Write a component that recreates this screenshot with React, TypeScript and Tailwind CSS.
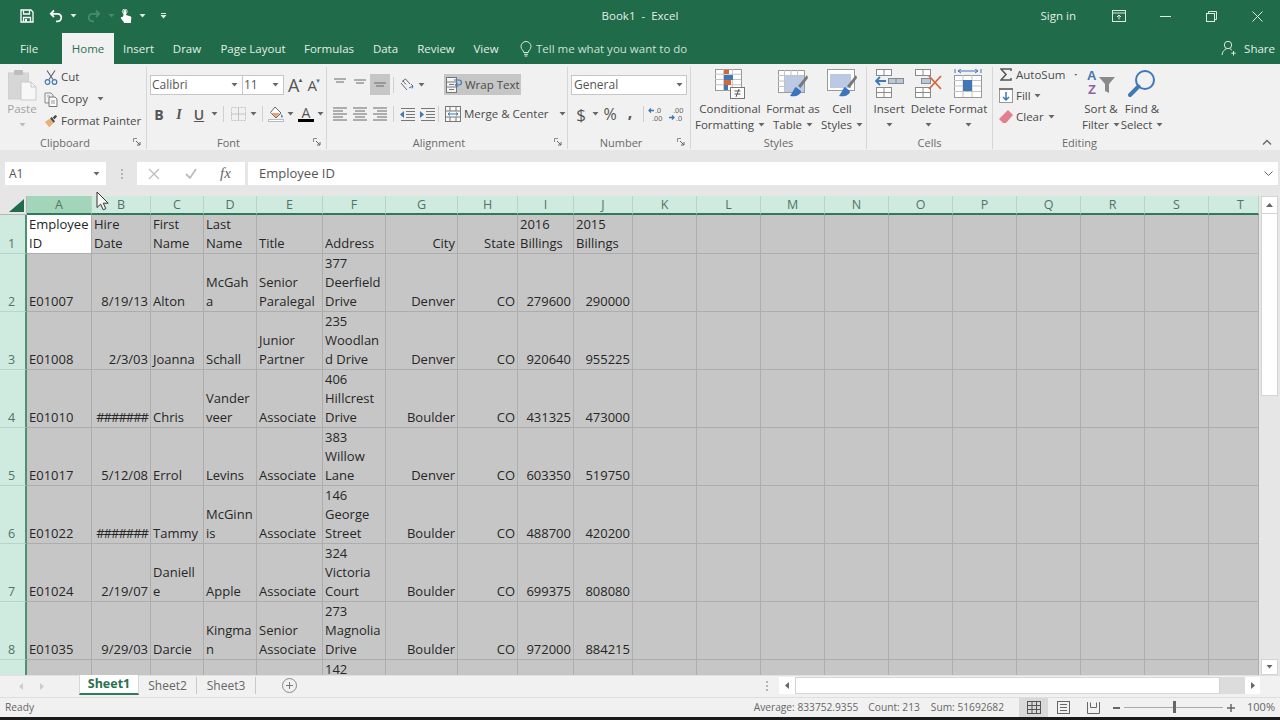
import React from "react";

const UI = "[font-family:'Open_Sans','Noto_Sans',sans-serif]";

const Caret = ({ c = "#666", className = "" }: { c?: string; className?: string }) => (
  <svg width="7" height="4" viewBox="0 0 7 4" className={className}><path d="M0.5 0h6L3.5 3.6z" fill={c} /></svg>
);

const Launcher = () => (
  <svg width="8" height="8" viewBox="0 0 8 8" className="absolute right-[5px] top-[3px]">
    <path d="M0.5 4V0.5H4" stroke="#8a8a8a" fill="none" />
    <path d="M3 3l4 4M4 7h3V4" stroke="#666" fill="none" />
  </svg>
);

const Lines = ({ w, align }: { w: number[]; align: "l" | "c" | "r" }) => (
  <svg width="16" height="14" viewBox="0 0 16 14">
    {w.map((len, i) => {
      const x = align === "l" ? 1 : align === "c" ? 8 - len / 2 : 15 - len;
      return <rect key={i} x={x} y={i * 3 + 0.5} width={len} height="1" fill="#6a6a6a" />;
    })}
  </svg>
);

const Group = ({ w, label, launcher, children, last }: { w: string; label: string; launcher?: boolean; children: React.ReactNode; last?: boolean }) => (
  <div className={`${w} flex flex-col h-[82px] mt-[3px] ${last ? "" : "border-r border-[#d6d6d6]"}`}>
    <div className="h-[67px] flex shrink-0">{children}</div>
    <div className={`relative h-[14px] mt-[1px] flex items-center justify-center text-[11px] text-[#6a6a6a] leading-none ${launcher ? "pr-[16px]" : ""}`}>
      {label}
      {launcher && <Launcher />}
    </div>
  </div>
);

const Large = ({ w, icon, l1, l2, caret, dim }: { w: string; icon: React.ReactNode; l1: string; l2?: string; caret?: boolean; dim?: boolean }) => (
  <div className={`${w} flex flex-col items-center shrink-0 whitespace-nowrap text-[11.5px] leading-[16px] ${dim ? "text-[#a3a3a3]" : "text-[#4a4a4a]"}`}>
    <div className="h-[32px] flex items-start justify-center">{icon}</div>
    <div>{l1}</div>
    <div className="h-[16px] flex items-center gap-[4px]">
      {l2 && <span>{l2}</span>}
      {caret && <Caret c={dim ? "#bbb" : "#666"} />}
    </div>
  </div>
);

const Small = ({ icon, label, caret, h = "h-[22px]", gap = "gap-[3px]", w = "w-[14px]" }: { icon: React.ReactNode; label: string; caret?: React.ReactNode; h?: string; gap?: string; w?: string }) => (
  <div className={`${h} flex items-center text-[11.5px] text-[#4a4a4a] whitespace-nowrap ${gap}`}>
    <div className={`${w} flex justify-center shrink-0`}>{icon}</div>
    <span>{label}</span>
    {caret}
  </div>
);

/* ---------- icons ---------- */
const Save = () => (
  <svg width="14" height="14" viewBox="0 0 14 14" fill="none" stroke="#fff" strokeWidth="1.3">
    <path d="M1 1h10l2 2v10H1z" /><path d="M3.5 1v4h6V1" /><path d="M3.5 13V8.5h7V13" /><rect x="5" y="10" width="2" height="3" fill="#fff" stroke="none" />
  </svg>
);
const Undo = ({ c = "#fff", className = "" }: { c?: string; className?: string }) => (
  <svg width="15" height="14" viewBox="0 0 15 14" fill="none" stroke={c} strokeWidth="1.8" className={className}>
    <path d="M5 1.5L1.8 4.8 5 8" /><path d="M2 4.8h6.5a3.7 3.7 0 0 1 0 7.6H7" />
  </svg>
);
const Touch = () => (
  <svg width="12" height="15" viewBox="0 0 12 15" fill="#fff">
    <path d="M3.5 6V2.2a1.3 1.3 0 0 1 2.6 0V6l4 1.3c1 .4 1.4 1 1.2 2L10.8 14H4.4L1 9.6c-.7-1 .5-2 1.4-1.3z" />
    <circle cx="4.8" cy="2.5" r="2.4" fill="none" stroke="#fff" strokeWidth=".8" />
  </svg>
);
const Bulb = () => (
  <svg width="12" height="16" viewBox="0 0 12 16" fill="none" stroke="#d8e8df" strokeWidth="1">
    <path d="M3.8 11.5C3.5 9.2 1 8.5 1 5.5a5 5 0 0 1 10 0c0 3-2.5 3.7-2.8 6z" /><path d="M4 13.3h4M4.6 15h2.8" />
  </svg>
);
const Person = () => (
  <svg width="16" height="16" viewBox="0 0 16 16" fill="none" stroke="#dfeae4" strokeWidth="1">
    <circle cx="7" cy="5" r="3.7" /><path d="M1 15c.3-3.5 2.5-5.500 4.500-6.300M8.800 8.700c.8.300 1.400.700 2 1.300" /><path d="M12.500 11v4.500M10.300 13.200h4.500" />
  </svg>
);
const WinRibbon = () => (
  <svg width="14" height="12" viewBox="0 0 14 12" fill="none" stroke="#dfeae4" strokeWidth="1">
    <rect x=".5" y=".5" width="13" height="11" /><path d="M.5 3h13" /><path d="M7 9.500V5M5 7l2-2 2 2" />
  </svg>
);
const Paste = () => (
  <svg width="29" height="32" viewBox="0 0 29 32">
    <rect x="0.500" y="4" width="20" height="26" fill="#d6d6d6" stroke="#cfcfcf" />
    <rect x="6" y="1" width="9" height="5" rx="1" fill="#bdbdbd" />
    <path d="M13 13h10l5 5v13H13z" fill="#f7f7f7" stroke="#c9c9c9" />
    <path d="M23 13v5h5" fill="none" stroke="#c9c9c9" />
  </svg>
);
const Scissors = () => (
  <svg width="14" height="15" viewBox="0 0 14 15" fill="none">
    <path d="M3 .5L9 9.500M11 .5L5 9.500" stroke="#666" strokeWidth="1.200" />
    <circle cx="3.500" cy="12" r="2.300" stroke="#3f78b5" strokeWidth="1.200" /><circle cx="10.500" cy="12" r="2.300" stroke="#3f78b5" strokeWidth="1.200" />
  </svg>
);
const Copy = () => (
  <svg width="14" height="15" viewBox="0 0 14 15" fill="none" stroke="#8a8a8a">
    <path d="M1 1h6l2 2v8H1z" fill="#f2f2f2" /><path d="M5 5h6l2 2v7.500H5z" fill="#fafafa" stroke="#777" /><path d="M7 9h4M7 11h4M3 4h3" stroke="#999" />
  </svg>
);
const Brush = () => (
  <svg width="15" height="14" viewBox="0 0 16 14">
    <path d="M1 8l6-4 4 5-5 5z" fill="#e8b174" /><path d="M7 4l4 5 1.500-1.500-3.500-5z" fill="#444" /><path d="M10 3l3-3 2 1.500-3 3.500z" fill="#444" />
  </svg>
);
const Borders = () => (
  <svg width="15" height="14" viewBox="0 0 15 14" fill="none" stroke="#c4c4c4">
    <rect x=".5" y=".5" width="14" height="13" strokeDasharray="2 1" /><path d="M7.500 0v14M0 7h15" />
  </svg>
);
const Fill = () => (
  <svg width="16" height="16" viewBox="0 0 16 16">
    <path d="M7 1l6 6-5 5-5.500-5.500z" fill="#fff" stroke="#666" /><path d="M3 7h9l-4 4.500z" fill="#e9a27d" /><path d="M13.500 8c1 1.500 1.500 2.300 1 3.200-.5.600-1.500.3-1.500-.6z" fill="#3f78b5" />
    <rect x="0.500" y="13.500" width="15" height="2" fill="#fff" stroke="#bbb" />
  </svg>
);
const OrientIcon = () => (
  <svg width="14" height="14" viewBox="0 0 14 14" fill="none" stroke="#666" strokeWidth="1">
    <path d="M1 5l6 7M3 3l3 3.500M2 3.500L5.500 1 10 6" /><path d="M9 10l4-2M11 6l2 2-1 2.500" stroke="#3f78b5" />
  </svg>
);
const Outdent = () => (
  <svg width="16" height="13" viewBox="0 0 16 13">
    <path d="M1 6.500L5 3v7z" fill="#3f78b5" /><path d="M2 0.500h14M7 3.500h9M7 6.500h9M7 9.500h9M2 12.500h14" stroke="#777" fill="none" />
  </svg>
);
const Indent = () => (
  <svg width="16" height="13" viewBox="0 0 16 13">
    <path d="M5 6.500L1 3v7z" fill="#3f78b5" /><path d="M2 0.500h14M7 3.500h9M7 6.500h9M7 9.500h9M2 12.500h14" stroke="#777" fill="none" />
  </svg>
);
const Wrap = () => (
  <svg width="16" height="16" viewBox="0 0 16 16" fill="none" className="shrink-0">
    <rect x=".5" y=".5" width="10" height="15" fill="#f4f4f4" stroke="#777" /><path d="M.5 5h10M.5 10h10M3 7.500h5M3 12.500h5" stroke="#777" />
    <path d="M8 3h5a2 2 0 0 1 0 5h-3M11.500 6L9.500 8l2 2" stroke="#3f78b5" strokeWidth="1.200" />
  </svg>
);
const Merge = () => (
  <svg width="16" height="16" viewBox="0 0 16 16" fill="none" stroke="#777" className="shrink-0">
    <rect x=".5" y=".5" width="15" height="15" fill="#f8f8f8" /><path d="M.5 5h15M.5 11h15M5 .5V5M11 .5V5M5 11v4.500M11 11v4.500" />
    <path d="M3 8h10M5 6.500L3 8l2 1.500M11 6.500L13 8l-2 1.500" stroke="#3f78b5" />
  </svg>
);
const IncDec = ({ inc }: { inc?: boolean }) => (
  <svg width="17" height="16" viewBox="0 0 17 16">
    <path d={inc ? "M1 4.500h5M3 2.500L1 4.500l2 2" : "M1 11.500h5M4 9.500l2 2-2 2"} stroke="#3f78b5" strokeWidth="1.300" fill="none" />
    <text x={inc ? 7 : 5} y="7" fontSize="7.500" fill="#666" fontFamily="Liberation Sans">{inc ? ".0" : ".00"}</text>
    <text x={inc ? 4 : 8} y="15" fontSize="7.500" fill="#666" fontFamily="Liberation Sans">{inc ? ".00" : ".0"}</text>
  </svg>
);
const TableGrid = ({ x, y, w, h, cols, rows }: { x: number; y: number; w: number; h: number; cols: number; rows: number }) => {
  const p: string[] = [];
  for (let i = 1; i < cols; i++) p.push(`M${x + (w * i) / cols} ${y}v${h}`);
  for (let i = 1; i < rows; i++) p.push(`M${x} ${y + (h * i) / rows}h${w}`);
  return <g><rect x={x + .5} y={y + .5} width={w} height={h} fill="#fff" stroke="#9a9a9a" /><path d={p.join("")} stroke="#c3c3c3" fill="none" /></g>;
};
const CondFmt = () => (
  <svg width="30" height="31" viewBox="0 0 30 31">
    <TableGrid x={0} y={0} w={26} h={21} cols={3} rows={4} />
    <rect x="9" y="1" width="5" height="4" fill="#d4663e" /><rect x="9" y="6" width="9" height="5" fill="#3f78b5" /><rect x="9" y="11" width="7" height="5" fill="#d4663e" /><rect x="9" y="16" width="4" height="5" fill="#3f78b5" />
    <rect x="15.500" y="18.500" width="14" height="11" fill="#fff" stroke="#777" />
    <path d="M19.500 22h6M19.500 25h6M24 20l-3 8" stroke="#555" fill="none" />
  </svg>
);
const FmtTable = () => (
  <svg width="30" height="30" viewBox="0 0 30 30">
    <TableGrid x={0} y={1} w={26} h={22} cols={4} rows={4} />
    <rect x="7" y="7" width="19" height="16" fill="#bcc9e4" />
    <path d="M29 6L20 17l2.500 2L30 9z" fill="#777" />
    <path d="M18 18c-2 1-3 5-6 9 6 1 11-1 11-5z" fill="#3a75c0" />
  </svg>
);
const CellStyles = () => (
  <svg width="30" height="30" viewBox="0 0 30 30">
    <rect x=".5" y=".5" width="27" height="21" fill="#fff" stroke="#9a9a9a" />
    <rect x="3" y="5" width="21" height="14" fill="#bcc9e4" />
    <path d="M29 6L20 17l2.500 2L30 9z" fill="#777" />
    <path d="M18 18c-2 1-3 5-6 9 6 1 11-1 11-5z" fill="#3a75c0" />
  </svg>
);
const InsertIcon = () => (
  <svg width="29" height="30" viewBox="0 0 29 30">
    <rect x="1.500" y=".5" width="15" height="6" fill="#fff" stroke="#8a8a8a" /><path d="M9 .5v6" stroke="#8a8a8a" />
    <rect x="1.500" y="18.500" width="15" height="10" fill="#fff" stroke="#8a8a8a" /><path d="M9 18v11M1 23.500h16" stroke="#8a8a8a" />
    <rect x="13.500" y="9.500" width="15" height="5" fill="#b6c7de" stroke="#8a8a8a" /><path d="M21 9v6" stroke="#8a8a8a" />
    <path d="M1 12h10M5 8L1 12l4 4" stroke="#3f78b5" strokeWidth="1.800" fill="none" />
  </svg>
);
const DeleteIcon = () => (
  <svg width="29" height="30" viewBox="0 0 29 30">
    <rect x="1.500" y=".5" width="15" height="6" fill="#fff" stroke="#8a8a8a" /><path d="M9 .5v6" stroke="#8a8a8a" />
    <rect x="1.500" y="18.500" width="15" height="10" fill="#fff" stroke="#8a8a8a" /><path d="M9 18v11M1 23.500h16" stroke="#8a8a8a" />
    <rect x="7.500" y="9.500" width="9" height="5" fill="#b6c7de" stroke="#8a8a8a" />
    <path d="M15 7l12 13M27 7L15 20" stroke="#d4663e" strokeWidth="1.800" />
  </svg>
);
const FormatIcon = () => (
  <svg width="28" height="31" viewBox="0 0 28 31">
    <path d="M1 0v4M27 0v4M4 2h20M4 2l3-2M4 2l3 2M24 2l-3-2M24 2l-3 2" stroke="#3f78b5" fill="none" />
    <TableGrid x={0} y={6} w={27} h={22} cols={3} rows={4} />
    <rect x="9" y="11" width="9" height="11" fill="#3f78b5" />
  </svg>
);
const Sigma = () => (
  <svg width="12" height="13" viewBox="0 0 12 13"><path d="M11 3V1H1l5 5.500L1 12h10v-2" fill="none" stroke="#555" strokeWidth="1.500" /></svg>
);
const FillIcon = () => (
  <svg width="14" height="15" viewBox="0 0 14 15"><rect x=".5" y=".5" width="13" height="14" fill="#fff" stroke="#999" /><rect x="0" y="0" width="14" height="2" fill="#777" /><path d="M7 4v8M4 9l3 3 3-3" stroke="#3f78b5" strokeWidth="1.500" fill="none" /></svg>
);
const Eraser = () => (
  <svg width="14" height="13" viewBox="0 0 14 13"><path d="M9 0l5 5-7 8H4L0 9z" fill="#e47f8f" /></svg>
);
const SortIcon = () => (
  <svg width="29" height="29" viewBox="0 0 29 29">
    <text x="0" y="11" fontSize="13" fill="#3f78b5" fontFamily="Liberation Sans" fontWeight="bold">A</text>
    <text x="1" y="25" fontSize="13" fill="#8f5fa8" fontFamily="Liberation Sans" fontWeight="bold">Z</text>
    <path d="M12 8h16l-6 7v9l-4-2v-7z" fill="#8a8a8a" />
  </svg>
);
const Magnifier = () => (
  <svg width="28" height="29" viewBox="0 0 28 29" fill="none" stroke="#3f78b5">
    <circle cx="17" cy="11" r="9" strokeWidth="2" /><path d="M10.500 17.500L2 26" strokeWidth="4" strokeLinecap="round" />
  </svg>
);
const Grid3 = ({ on }: { on?: boolean }) => (
  <svg width="14" height="13" viewBox="0 0 14 13" fill="none" stroke={on ? "#555" : "#666"}>
    <rect x=".5" y=".5" width="13" height="12" /><path d="M5 .5v12M9.500 .5v12M.5 4.500h13M.5 8.500h13" />
  </svg>
);

/* ---------- sheet data ---------- */
const cols = ["A", "B", "C", "D", "E", "F", "G", "H", "I", "J", "K", "L", "M", "N", "O", "P", "Q", "R", "S", "T"];
type Row = { n: number; cells: string[] };
const R = "r:"; // right aligned prefix
const rows: Row[] = [
  { n: 1, cells: ["Employee\nID", "Hire\nDate", "First\nName", "Last\nName", "Title", "Address", R + "City", R + "State", "2016\nBillings", "2015\nBillings"] },
  { n: 2, cells: ["E01007", R + "8/19/13", "Alton", "McGah\na", "Senior\nParalegal", "377\nDeerfield\nDrive", R + "Denver", R + "CO", R + "279600", R + "290000"] },
  { n: 3, cells: ["E01008", R + "2/3/03", "Joanna", "Schall", "Junior\nPartner", "235\nWoodlan\nd Drive", R + "Denver", R + "CO", R + "920640", R + "955225"] },
  { n: 4, cells: ["E01010", R + "#######", "Chris", "Vander\nveer", "Associate", "406\nHillcrest\nDrive", R + "Boulder", R + "CO", R + "431325", R + "473000"] },
  { n: 5, cells: ["E01017", R + "5/12/08", "Errol", "Levins", "Associate", "383\nWillow\nLane", R + "Denver", R + "CO", R + "603350", R + "519750"] },
  { n: 6, cells: ["E01022", R + "#######", "Tammy", "McGinn\nis", "Associate", "146\nGeorge\nStreet", R + "Boulder", R + "CO", R + "488700", R + "420200"] },
  { n: 7, cells: ["E01024", R + "2/19/07", "Daniell\ne", "Apple", "Associate", "324\nVictoria\nCourt", R + "Boulder", R + "CO", R + "699375", R + "808080"] },
  { n: 8, cells: ["E01035", R + "9/29/03", "Darcie", "Kingma\nn", "Senior\nAssociate", "273\nMagnolia\nDrive", R + "Boulder", R + "CO", R + "972000", R + "884215"] },
];

const Cell = ({ text, white, top }: { text?: string; white?: boolean; top?: boolean }) => {
  const right = text?.startsWith(R);
  const t = right ? text!.slice(2) : text;
  return (
    <div className={`flex flex-col overflow-hidden whitespace-pre-line border-r border-b border-[#adadad] px-[2px] ${top ? "justify-start" : "justify-end"} ${right ? "text-right" : "text-left"} ${white ? "bg-white" : "bg-[#c6c6c6]"} ${t === "#######" ? "tracking-[-1px]" : ""}`}>
      {t}
    </div>
  );
};

const Dots = ({ cls = "" }: { cls?: string }) => (
  <div className={`flex flex-col gap-[2px] ${cls}`}><div className="w-[2px] h-[2px] bg-[#b5b5b5]" /><div className="w-[2px] h-[2px] bg-[#b5b5b5]" /><div className="w-[2px] h-[2px] bg-[#b5b5b5]" /></div>
);

export default function App() {
  return (
    <div className={`relative w-[1280px] h-[720px] overflow-hidden flex flex-col bg-[#e6e6e6] ${UI}`}>
      {/* title bar */}
      <div className="h-[32px] shrink-0 bg-[#1f6b4a] grid grid-cols-[1fr_auto_1fr] items-center text-[11.5px] text-[#e4eee9]">
        <div className="flex items-center pl-[20px]">
          <Save />
          <div className="ml-[15px]"><Undo /></div>
          <Caret c="#dfeae4" className="ml-[6px]" />
          <div className="ml-[9px]"><Undo c="#4a8a6d" className="-scale-x-100" /></div>
          <Caret c="#4a8a6d" className="ml-[7px]" />
          <div className="ml-[5px]"><Touch /></div>
          <Caret c="#dfeae4" className="ml-[7px]" />
          <div className="ml-[14px] flex flex-col items-center gap-[1px]"><div className="w-[5px] h-px bg-[#dfeae4]" /><Caret c="#dfeae4" /></div>
        </div>
        <div>Book1&nbsp; -&nbsp; Excel</div>
        <div className="flex items-center justify-end">
          <span className="mr-[20px]">Sign in</span>
          <div className="w-[46px] flex justify-center"><WinRibbon /></div>
          <div className="w-[46px] flex justify-center"><div className="w-[11px] h-px bg-[#dfeae4]" /></div>
          <div className="w-[46px] flex justify-center">
            <svg width="11" height="11" viewBox="0 0 11 11" fill="none" stroke="#dfeae4"><rect x=".5" y="2.500" width="8" height="8" /><path d="M2.500 2.500V.5h8v8H8.500" /></svg>
          </div>
          <div className="w-[46px] flex justify-center">
            <svg width="11" height="11" viewBox="0 0 11 11" stroke="#dfeae4"><path d="M.5 .5l10 10M10.500 .5l-10 10" /></svg>
          </div>
        </div>
      </div>

      {/* tabs */}
      <div className="h-[32px] shrink-0 bg-[#1f6b4a] flex text-[11.5px] text-[#e4eee9]">
        <div className="w-[62px] pl-[20px] pt-[8px]">File</div>
        <div className="w-[52px] h-[31px] mt-[1px] bg-[#f1f1f1] text-[#2a7050] flex justify-center pt-[7px]">Home</div>
        <div className="w-[49px] flex justify-center pt-[8px]">Insert</div>
        <div className="w-[48px] flex justify-center pt-[8px]">Draw</div>
        <div className="w-[84px] flex justify-center pt-[8px]">Page Layout</div>
        <div className="w-[68px] flex justify-center pt-[8px]">Formulas</div>
        <div className="w-[45px] flex justify-center pt-[8px]">Data</div>
        <div className="w-[56px] flex justify-center pt-[8px]">Review</div>
        <div className="w-[44px] flex justify-center pt-[8px]">View</div>
        <div className="ml-[12px] mt-[9px] h-[16px] flex gap-[4px] text-[#cfe0d7]"><Bulb /><span className="-mt-[1px]">Tell me what you want to do</span></div>
        <div className="ml-auto mr-[5px] flex gap-[7px] mt-[8px] h-[16px]"><Person /><span>Share</span></div>
      </div>

      {/* ribbon */}
      <div className="h-[86px] shrink-0 bg-[#f1f1f1] flex relative">
        <Group w="w-[147px]" label="Clipboard" launcher>
          <div className="flex">
            <div className="w-[44px] pl-[1px] pt-[2px]"><Large w="w-[42px]" icon={<Paste />} l1="Paste" caret dim /></div>
            <div className="flex flex-col -mt-[1px]">
              <Small icon={<Scissors />} label="Cut" />
              <Small icon={<Copy />} label="Copy" caret={<Caret className="ml-[6px]" />} />
              <Small icon={<Brush />} label="Format Painter" />
            </div>
          </div>
        </Group>

        <Group w="w-[180px]" label="Font" launcher>
          <div className="flex flex-col pl-[3px] pt-[8px]">
            <div className="flex items-center h-[20px]">
              <div className="w-[93px] h-[20px] bg-white border border-[#c6c6c6] flex items-center justify-between pl-[1px] pr-[4px] text-[12px] text-[#555]">Calibri<Caret /></div>
              <div className="w-[41px] h-[20px] bg-white border border-l-0 border-[#c6c6c6] flex items-center justify-between pl-[1px] pr-[4px] text-[12px] text-[#555]">11<Caret /></div>
              <span className="ml-[4px] text-[18px] text-[#555] relative leading-none">A<span className="absolute -right-[4px] top-[1px] text-[6px] text-[#555]">▲</span></span>
              <span className="ml-[8px] text-[15px] text-[#555] relative leading-none">A<span className="absolute -right-[4px] top-0 text-[6px] text-[#3f78b5]">▼</span></span>
            </div>
            <div className="flex items-center h-[22px] mt-[8px]">
              <span className="w-[20px] ml-[-1px] text-center text-[14px] font-bold text-[#555]">B</span>
              <span className="w-[20px] text-center text-[14px] italic font-bold text-[#555] [font-family:'Liberation_Serif',serif]">I</span>
              <span className="w-[20px] text-center text-[14px] underline text-[#555] font-semibold">U</span>
              <Caret className="ml-[2px]" />
              <div className="w-px h-[16px] bg-[#d0d0d0] ml-[5px] mr-[7px]" />
              <Borders />
              <Caret className="ml-[4px]" />
              <div className="w-px h-[16px] bg-[#d0d0d0] ml-[5px] mr-[5px]" />
              <Fill />
              <Caret className="ml-[3px]" />
              <div className="ml-[4px] w-[16px] flex flex-col items-center text-[14px] leading-[13px] text-[#555]">A<div className="w-[16px] h-[3px] bg-black" /></div>
              <Caret className="ml-[3px]" />
            </div>
          </div>
        </Group>

        <Group w="w-[241px]" label="Alignment" launcher>
          <div className="flex flex-col pl-[5px] pt-[7px]">
            <div className="flex items-center h-[21px]">
              <div className="w-[16px]"><Lines w={[12, 8]} align="c" /></div>
              <div className="w-[16px] ml-[4px] pt-[3px]"><Lines w={[12, 8]} align="c" /></div>
              <div className="w-[20px] h-[21px] ml-[2px] bg-[#c6c6c6] flex justify-center pt-[8px]"><Lines w={[12, 8]} align="c" /></div>
              <div className="w-px h-[16px] bg-[#d0d0d0] ml-[3px] mr-[6px]" />
              <OrientIcon />
              <Caret className="ml-[4px]" />
              <div className="ml-[19px] w-[77px] h-[21px] bg-[#c6c6c6] flex items-center gap-[3px] pl-[2px] text-[11.5px] text-[#4a4a4a] whitespace-nowrap"><Wrap />Wrap Text</div>
            </div>
            <div className="flex items-center h-[22px] mt-[8px]">
              <div className="w-[16px]"><Lines w={[14, 10, 14, 10, 14]} align="l" /></div>
              <div className="w-[16px] ml-[4px]"><Lines w={[14, 10, 14, 10, 14]} align="c" /></div>
              <div className="w-[16px] ml-[4px]"><Lines w={[14, 10, 14, 10, 14]} align="r" /></div>
              <div className="w-px h-[16px] bg-[#d0d0d0] ml-[5px] mr-[5px]" />
              <Outdent />
              <div className="ml-[4px]"><Indent /></div>
              <div className="w-px h-[16px] bg-[#d0d0d0] ml-[3px] mr-[3px]" />
              <div className="ml-[3px] flex items-center gap-[3px] text-[11.5px] text-[#4a4a4a] whitespace-nowrap"><Merge />Merge &amp; Center<Caret className="ml-[7px]" /></div>
            </div>
          </div>
        </Group>

        <Group w="w-[123px]" label="Number" launcher>
          <div className="flex flex-col pl-[3px] pt-[8px]">
            <div className="w-[116px] h-[20px] bg-white border border-[#c6c6c6] flex items-center justify-between pl-[2px] pr-[3px] text-[12px] text-[#555]">General<Caret /></div>
            <div className="flex items-center h-[22px] mt-[8px] text-[#555]">
              <span className="w-[20px] text-center text-[17px] leading-none">$</span>
              <Caret className="ml-[1px]" />
              <span className="w-[20px] ml-[1px] text-center text-[16px] leading-none">%</span>
              <span className="w-[20px] text-center text-[16px] font-bold leading-none -mt-[4px]">,</span>
              <div className="w-px h-[16px] bg-[#d0d0d0] ml-[3px] mr-[4px]" />
              <IncDec inc />
              <div className="ml-[3px]"><IncDec /></div>
            </div>
          </div>
        </Group>

        <Group w="w-[176px]" label="Styles">
          <div className="flex pt-[2px]">
            <Large w="w-[78px]" icon={<CondFmt />} l1="Conditional" l2="Formatting" caret />
            <Large w="w-[48px]" icon={<FmtTable />} l1="Format as" l2="Table" caret />
            <Large w="w-[50px]" icon={<CellStyles />} l1="Cell" l2="Styles" caret />
          </div>
        </Group>

        <Group w="w-[126px]" label="Cells">
          <div className="flex pl-[3px] pt-[2px]">
            <Large w="w-[38px]" icon={<InsertIcon />} l1="Insert" caret />
            <Large w="w-[40px]" icon={<DeleteIcon />} l1="Delete" caret />
            <Large w="w-[40px]" icon={<FormatIcon />} l1="Format" caret />
          </div>
        </Group>

        <Group w="w-[173px]" label="Editing" last>
          <div className="flex">
            <div className="w-[85px] pl-[5px] flex flex-col -mt-[3px]">
              <Small h="h-[21px]" w="w-[15px]" icon={<Sigma />} label="AutoSum" caret={<Caret className="ml-[6px]" />} />
              <Small h="h-[21px]" w="w-[15px]" icon={<FillIcon />} label="Fill" caret={<Caret />} />
              <Small h="h-[21px]" w="w-[15px]" icon={<Eraser />} label="Clear" caret={<Caret className="ml-[1px]" />} />
            </div>
            <div className="pt-[2px] flex">
              <Large w="w-[46px]" icon={<SortIcon />} l1="Sort &amp;" l2="Filter" caret />
              <Large w="w-[36px]" icon={<Magnifier />} l1="Find &amp;" l2="Select" caret />
            </div>
          </div>
        </Group>

        <svg width="10" height="6" viewBox="0 0 10 6" className="absolute right-[8px] top-[75px]" fill="none" stroke="#666" strokeWidth="1.300"><path d="M1 5.500l4-4 4 4" /></svg>
      </div>

      {/* formula bar */}
      <div className="h-[46px] shrink-0 bg-[#e6e6e6] pt-[12px] flex text-[12px] text-[#555]">
        <div className="ml-[5px] w-[101px] h-[23px] bg-white flex items-center justify-between pl-[4px] pr-[6px]">A1<Caret /></div>
        <div className="w-[31px] h-[23px] flex justify-center items-center"><Dots /></div>
        <div className="w-[108px] h-[23px] bg-white flex items-center pl-[11px]">
          <svg width="12" height="12" viewBox="0 0 12 12" stroke="#bdbdbd" strokeWidth="1.300"><path d="M1 1l10 10M11 1L1 11" /></svg>
          <svg width="12" height="11" viewBox="0 0 12 11" fill="none" stroke="#bdbdbd" strokeWidth="1.800" className="ml-[25px]"><path d="M1 6l4 4 6-9" /></svg>
          <span className="ml-[23px] italic text-[15px] text-[#666] [font-family:'Liberation_Serif',serif]">fx</span>
        </div>
        <div className="ml-[3px] w-[1030px] h-[23px] bg-white flex items-center justify-between pl-[11px] pr-[5px] text-[13px]">
          Employee ID
          <svg width="9" height="5" viewBox="0 0 9 5" fill="none" stroke="#666"><path d="M.5 .5l4 4 4-4" /></svg>
        </div>
      </div>

      {/* sheet */}
      <div className="flex h-[479px] shrink-0 overflow-hidden">
        <div className="w-[1260px] h-[479px] overflow-hidden grid grid-cols-[27px_65px_59px_53px_53px_66px_63px_72px_60px_56px_59px_64px_64px_64px_64px_64px_64px_64px_64px_64px_50px] grid-rows-[19px_39px_58px_58px_58px_58px_58px_58px_58px_58px] text-[13px] leading-[19px] text-[#262626]">
          {/* corner */}
          <div className="bg-[#e6e6e6] border-r border-b border-[#b5b5b5] flex items-end justify-end p-[2px]">
            <svg width="15" height="13" viewBox="0 0 15 13"><path d="M15 0v13H0z" fill="#1f6b4a" /></svg>
          </div>
          {cols.map((c, i) => (
            <div key={c} className={`flex items-center border-r border-[#b5d5c6] border-b-2 border-b-[#2f7a58] text-[12.5px] text-[#4f7565] ${i === 19 ? "justify-start pl-[28px]" : "justify-center"} ${i === 0 ? "bg-[#a3d5bb]" : "bg-[#cfeadf]"}`}>{c}</div>
          ))}
          {rows.map((r) => (
            <React.Fragment key={r.n}>
              <div className="bg-[#cfeadf] border-r-2 border-[#4f8f73] border-b border-b-[#b5d5c6] flex items-end justify-center pr-[2px] text-[12.5px] text-[#4f7565]">{r.n}</div>
              {cols.map((c, i) => (
                <Cell key={c} text={r.cells[i]} white={r.n === 1 && i === 0} />
              ))}
            </React.Fragment>
          ))}
          <div className="bg-[#cfeadf] border-r-2 border-[#4f8f73]" />
          {cols.map((c, i) => (
            <Cell key={c} text={i === 5 ? "142" : undefined} top />
          ))}
        </div>
        {/* vertical scrollbar */}
        <div className="w-[20px] h-[479px] bg-[#e6e6e6] pl-[1px] flex flex-col">
          <div className="w-[17px] h-[18px] bg-white border border-[#d4d4d4] flex items-center justify-center"><svg width="7" height="4" viewBox="0 0 7 4"><path d="M3.5 0l3.5 4H0z" fill="#666" /></svg></div>
          <div className="w-[17px] h-[182px] bg-white border border-[#d4d4d4] border-t-0" />
          <div className="flex-1" />
          <div className="w-[17px] h-[16px] bg-white border border-[#d4d4d4] flex items-center justify-center"><Caret /></div>
        </div>
      </div>

      {/* sheet tabs */}
      <div className="h-[22px] shrink-0 bg-[#f1f1f1] flex items-start text-[12px] text-[#666] border-t border-[#e0e0e0]">
        <div className="w-[79px] h-[20px] flex items-center pl-[19px] gap-[17px]">
          <svg width="4" height="7" viewBox="0 0 4 7"><path d="M4 0v7L0 3.5z" fill="#ccc" /></svg>
          <svg width="4" height="7" viewBox="0 0 4 7"><path d="M0 0v7l4-3.5z" fill="#ccc" /></svg>
        </div>
        <div className="w-[60px] h-[20px] -mt-px bg-white border-x border-[#d8d8d8] border-b-2 border-b-[#2f7a58] font-bold text-[#2a7050] flex items-center justify-center text-[12.5px]">Sheet1</div>
        <div className="w-[58px] h-[17px] mt-[1px] border-r border-[#c8c8c8] flex items-center justify-center">Sheet2</div>
        <div className="w-[59px] h-[17px] mt-[1px] border-r border-[#c8c8c8] flex items-center justify-center">Sheet3</div>
        <div className="ml-[26px] mt-[2px] w-[15px] h-[15px] rounded-full border border-[#8a8a8a] flex items-center justify-center">
          <svg width="7" height="7" viewBox="0 0 7 7" stroke="#777"><path d="M3.5 0v7M0 3.5h7" /></svg>
        </div>
        <div className="ml-auto flex items-center mt-[1px] pr-[20px]">
          <Dots cls="mr-[11px]" />
          <div className="w-[16px] h-[17px] bg-white flex items-center justify-center"><svg width="4" height="7" viewBox="0 0 4 7"><path d="M4 0v7L0 3.5z" fill="#666" /></svg></div>
          <div className="w-[425px] h-[17px] bg-white border border-[#d4d4d4]" />
          <div className="w-[25px] h-[17px] bg-[#dcdcdc]" />
          <div className="w-[15px] h-[17px] bg-white flex items-center justify-center"><svg width="4" height="7" viewBox="0 0 4 7"><path d="M0 0v7l4-3.5z" fill="#666" /></svg></div>
        </div>
      </div>

      {/* status bar */}
      <div className="h-[20px] shrink-0 bg-[#f1f1f1] flex items-center text-[10.2px] text-[#666] border-t border-[#dedede]">
        <span className="pl-[5px] pt-[1px]">Ready</span>
        <div className="ml-auto flex items-center h-[20px]">
          <span className="pt-[1px]">Average: 833752.9355</span>
          <span className="ml-[10px] pt-[1px]">Count: 213</span>
          <span className="ml-[11px] pt-[1px]">Sum: 51692682</span>
          <div className="ml-[15px] w-[29px] h-[20px] bg-[#d9d9d9] flex items-center justify-center"><Grid3 on /></div>
          <div className="ml-[8px] w-[14px] flex justify-center"><svg width="13" height="13" viewBox="0 0 13 13" fill="none" stroke="#666"><rect x=".5" y=".5" width="12" height="12" /><path d="M3 3.500h7M3 6.500h7M3 9.500h7" /></svg></div>
          <div className="ml-[16px] w-[14px] flex justify-center"><svg width="13" height="12" viewBox="0 0 13 12" fill="none" stroke="#666"><path d="M.5 0v11.500h12V0M3.500 .5v5h6v-5" /></svg></div>
          <div className="ml-[13px] w-[7px] h-[2px] bg-[#666]" />
          <div className="ml-[4px] w-[99px] h-[1px] bg-[#aaa] relative"><div className="absolute left-[49px] -top-[6px] w-[3px] h-[12px] bg-[#666]" /></div>
          <svg width="8" height="8" viewBox="0 0 8 8" stroke="#666" strokeWidth="1.500" className="ml-[4px]"><path d="M4 0v8M0 4h8" /></svg>
          <span className="ml-[12px] pr-[5px] text-[11px]">100%</span>
        </div>
      </div>
      <div className="flex-1 bg-[#1a1a1a]" />

      {/* mouse pointer */}
      <svg width="13" height="20" viewBox="0 0 13 20" className="absolute left-[96px] top-[191px]">
        <path d="M1 1v15.500l3.700-3.300 2.500 5.600 2.600-1.100-2.500-5.500h4.900z" fill="#f8f8f8" stroke="#333" strokeWidth="1" strokeLinejoin="round" />
      </svg>
    </div>
  );
}
